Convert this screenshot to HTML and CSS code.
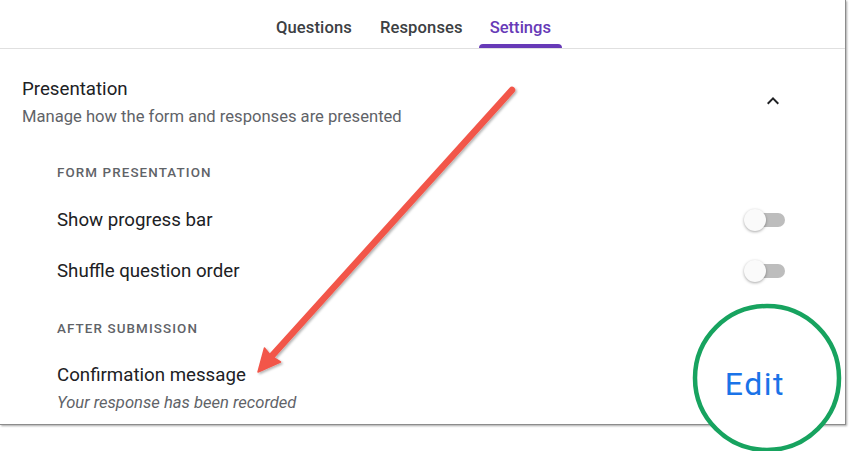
FILE: index.html
```html
<!DOCTYPE html>
<html>
<head>
<meta charset="utf-8">
<link rel="stylesheet" href="styles.css">
</head>
<body>
<div class="card">
  <nav class="tabs">
    <div class="tab">Questions</div>
    <div class="tab">Responses</div>
    <div class="tab active">Settings</div>
  </nav>
  <section class="header">
    <div class="header-text">
      <div class="title">Presentation</div>
      <div class="subtitle">Manage how the form and responses are presented</div>
    </div>
    <svg class="chevron" viewBox="0 0 24 24" width="24" height="24"><path d="M12 8l-6 6 1.41 1.41L12 10.83l4.59 4.58L18 14z" fill="#202124"/></svg>
  </section>
  <div class="label first">FORM PRESENTATION</div>
  <div class="row">
    <span class="row-title">Show progress bar</span>
    <span class="toggle"><span class="knob"></span></span>
  </div>
  <div class="row">
    <span class="row-title">Shuffle question order</span>
    <span class="toggle"><span class="knob"></span></span>
  </div>
  <div class="label second">AFTER SUBMISSION</div>
  <div class="confirm">
    <div>
      <div class="row-title">Confirmation message</div>
      <div class="note">Your response has been recorded</div>
    </div>
    <span class="edit">Edit</span>
  </div>
</div>
<svg class="annot" width="850" height="451" viewBox="0 0 850 451">
  <defs>
    <filter id="sh" x="-10%" y="-10%" width="130%" height="130%">
      <feDropShadow dx="1.5" dy="1.5" stdDeviation="1.2" flood-color="#000" flood-opacity="0.3"/>
    </filter>
  </defs>
  <g filter="url(#sh)">
    <line x1="512" y1="90" x2="270" y2="358" stroke="#f2564a" stroke-width="6.5" stroke-linecap="round"/>
    <polygon points="258,372 264.5,348 271,356 280.5,362" fill="#f2564a" stroke="#f2564a" stroke-width="1.5" stroke-linejoin="round"/>
  </g>
  <circle cx="767" cy="378" r="72" fill="#fff" stroke="#17a35f" stroke-width="4.5"/>
</svg>
</body>
</html>
```
FILE: styles.css
```css
html, body {
  margin: 0;
  padding: 0;
  background: #fff;
}
body {
  width: 850px;
  height: 451px;
  overflow: hidden;
  position: relative;
  font-family: Roboto, "Liberation Sans", Arial, sans-serif;
}
.card {
  width: 846px;
  box-sizing: border-box;
  background: #fff;
  border-right: 1px solid #8c8c8c;
  border-bottom: 1px solid #8c8c8c;
  box-shadow: 1px 1px 2px rgba(0,0,0,0.35);
  padding-bottom: 11px;
}
.tabs {
  display: flex;
  gap: 4px;
  height: 48px;
  padding-left: 264px;
  border-bottom: 1px solid #e0e0e0;
}
.tab {
  padding: 0 12px;
  font-size: 16.6px;
  font-weight: 500;
  color: #3c4043;
  line-height: 56px;
  height: 48px;
  box-sizing: border-box;
  letter-spacing: 0.1px;
}
.tab.active {
  color: #673ab7;
  position: relative;
  padding: 0 11px;
  letter-spacing: 0;
}
.tab.active::after {
  content: "";
  position: absolute;
  left: 0;
  right: 0;
  bottom: 0;
  height: 4px;
  background: #673ab7;
  border-radius: 4px 4px 0 0;
}
.header {
  display: flex;
  justify-content: space-between;
  align-items: center;
  padding: 0 60px 0 22px;
  margin-top: 28px;
}
.title {
  font-size: 18.7px;
  line-height: 24px;
  color: #202124;
}
.subtitle {
  font-size: 16.6px;
  line-height: 24px;
  color: #5f6368;
  margin-top: 4px;
}
.chevron {
  display: block;
  margin-top: -4px;
}
.label {
  padding-left: 57px;
  font-size: 13.4px;
  font-weight: 500;
  letter-spacing: 1.1px;
  line-height: 20px;
  color: #5f6368;
}
.label.first { margin-top: 34px; }
.label.second { margin-top: 23px; }
.row {
  display: flex;
  justify-content: space-between;
  align-items: center;
  height: 51px;
  padding: 0 60px 0 57px;
}
.label.first + .row { margin-top: 11px; }
.row-title {
  font-size: 18.7px;
  line-height: 24px;
  color: #202124;
}
.toggle {
  position: relative;
  display: block;
  width: 38px;
  height: 14px;
  border-radius: 7px;
  background: #bdbdbd;
}
.knob {
  position: absolute;
  left: -3px;
  top: -4px;
  width: 22px;
  height: 22px;
  border-radius: 50%;
  background: #fafafa;
  box-shadow: 0 1px 3px rgba(0,0,0,0.35);
}
.confirm {
  display: flex;
  justify-content: space-between;
  align-items: center;
  padding: 0 60px 0 57px;
  margin-top: 24px;
}
.note {
  font-size: 16.6px;
  font-style: italic;
  line-height: 20px;
  color: #5f6368;
  margin-top: 6px;
}
.edit {
  position: relative;
  z-index: 2;
  font-size: 32px;
  letter-spacing: 1.5px;
  color: #1a73e8;
  margin-top: -9px;
}
.annot {
  position: absolute;
  left: 0;
  top: 0;
  z-index: 1;
  pointer-events: none;
}
```
